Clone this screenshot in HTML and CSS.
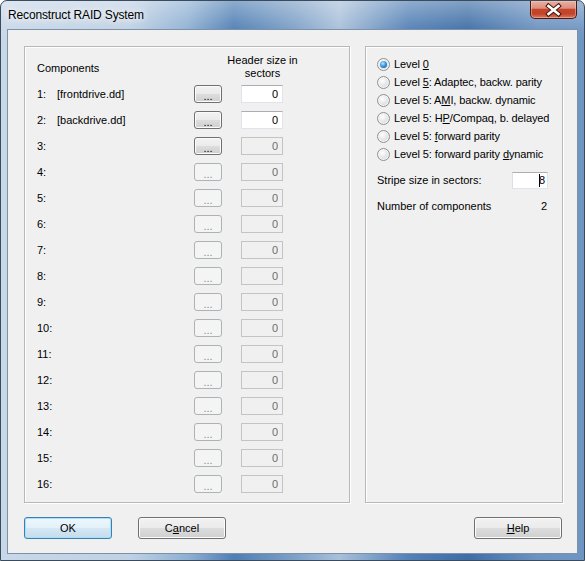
FILE: index.html
```html
<!DOCTYPE html>
<html>
<head>
<meta charset="utf-8">
<title>Reconstruct RAID System</title>
<link rel="stylesheet" href="styles.css">
</head>
<body>
<div class="window">
  <div class="titlebar">
    <span class="title">Reconstruct RAID System</span>
    <div class="close">
      <svg width="45" height="18" viewBox="0 0 45 18">
        <path d="M17.5 5 L27.5 13 M27.5 5 L17.5 13" stroke="#43160f" stroke-width="4.6" stroke-linecap="square" fill="none"/>
        <path d="M17.5 5 L27.5 13 M27.5 5 L17.5 13" stroke="#ffffff" stroke-width="2.6" stroke-linecap="square" fill="none"/>
      </svg>
    </div>
  </div>
  <div class="client">
    <div class="groups">
      <div class="group left-group">
        <div class="comp-grid">
          <div class="hdr-comp">Components</div>
          <div class="hdr-size">Header size in<br>sectors</div>

          <span class="num">1:</span><span class="name">[frontdrive.dd]</span><button class="btn dots">...</button><input class="in" value="0">
          <span class="num">2:</span><span class="name">[backdrive.dd]</span><button class="btn dots">...</button><input class="in" value="0">
          <span class="num">3:</span><span class="name"></span><button class="btn dots">...</button><input class="in" value="0" disabled>
          <span class="num">4:</span><span class="name"></span><button class="btn dots" disabled>...</button><input class="in" value="0" disabled>
          <span class="num">5:</span><span class="name"></span><button class="btn dots" disabled>...</button><input class="in" value="0" disabled>
          <span class="num">6:</span><span class="name"></span><button class="btn dots" disabled>...</button><input class="in" value="0" disabled>
          <span class="num">7:</span><span class="name"></span><button class="btn dots" disabled>...</button><input class="in" value="0" disabled>
          <span class="num">8:</span><span class="name"></span><button class="btn dots" disabled>...</button><input class="in" value="0" disabled>
          <span class="num">9:</span><span class="name"></span><button class="btn dots" disabled>...</button><input class="in" value="0" disabled>
          <span class="num">10:</span><span class="name"></span><button class="btn dots" disabled>...</button><input class="in" value="0" disabled>
          <span class="num">11:</span><span class="name"></span><button class="btn dots" disabled>...</button><input class="in" value="0" disabled>
          <span class="num">12:</span><span class="name"></span><button class="btn dots" disabled>...</button><input class="in" value="0" disabled>
          <span class="num">13:</span><span class="name"></span><button class="btn dots" disabled>...</button><input class="in" value="0" disabled>
          <span class="num">14:</span><span class="name"></span><button class="btn dots" disabled>...</button><input class="in" value="0" disabled>
          <span class="num">15:</span><span class="name"></span><button class="btn dots" disabled>...</button><input class="in" value="0" disabled>
          <span class="num">16:</span><span class="name"></span><button class="btn dots" disabled>...</button><input class="in" value="0" disabled>
        </div>
      </div>
      <div class="group right-group">
        <div class="radios">
          <div class="radio-row"><span class="radio on"></span><span>Level <u>0</u></span></div>
          <div class="radio-row"><span class="radio"></span><span>Level <u>5</u>: Adaptec, backw. parity</span></div>
          <div class="radio-row"><span class="radio"></span><span>Level 5: A<u>M</u>I, backw. dynamic</span></div>
          <div class="radio-row"><span class="radio"></span><span>Level 5: H<u>P</u>/Compaq, b. delayed</span></div>
          <div class="radio-row"><span class="radio"></span><span>Level 5: <u>f</u>orward parity</span></div>
          <div class="radio-row"><span class="radio"></span><span>Level 5: forward parity <u>d</u>ynamic</span></div>
        </div>
        <div class="field-row stripe">
          <span>Stripe size in sectors:</span>
          <div class="stripe-in"><span class="caret"></span>8</div>
        </div>
        <div class="field-row count">
          <span>Number of components</span>
          <span>2</span>
        </div>
      </div>
    </div>
    <div class="buttons">
      <button class="btn push default">OK</button>
      <button class="btn push cancel">C<u>a</u>ncel</button>
      <button class="btn push help"><u>H</u>elp</button>
    </div>
  </div>
</div>
</body>
</html>
```

FILE: styles.css
```css
html, body {
  margin: 0;
  padding: 0;
}

body {
  width: 585px;
  height: 561px;
  overflow: hidden;
  font-family: "Liberation Sans", Arial, sans-serif;
  font-size: 11px;
  color: #000;
  background: #ffffff;
}

.window {
  width: 585px;
  height: 561px;
  box-sizing: border-box;
  display: flex;
  flex-direction: column;
  border: 1px solid #3b4b5e;
  border-radius: 7px 7px 0 0;
  overflow: hidden;
  background:
    linear-gradient(180deg, rgba(255,255,255,0.35) 0px, rgba(255,255,255,0.05) 28px, rgba(255,255,255,0) 40px),
    linear-gradient(90deg, #c9d8e8 0%, #c0d1e4 22%, #8fb0d3 32%, #4f7eb3 40%, #7c9fc6 50%, #a9c0da 58%, #5380b5 70%, #3e6ea6 80%, #6d93c0 92%, #6f95c2 100%);
}

.titlebar {
  height: 28px;
  flex: none;
  display: flex;
  justify-content: space-between;
  align-items: center;
  padding-left: 7px;
}

.title {
  font-family: "Liberation Sans", Arial, sans-serif;
  font-size: 12px;
  color: #000;
  text-shadow: 0 0 6px #fff, 0 0 10px rgba(255,255,255,0.9);
  letter-spacing: -0.15px;
}

.close {
  align-self: flex-start;
  width: 47px;
  height: 18px;
  box-sizing: border-box;
  margin-right: 7px;
  border: 1px solid #4a1a12;
  border-top: none;
  border-radius: 0 0 5px 5px;
  background: linear-gradient(180deg, #eab0a3 0%, #de8f7c 42%, #c4452b 50%, #c24328 75%, #dc7660 100%);
  box-shadow: inset 0 0 0 1px rgba(255, 210, 200, 0.45);
  display: flex;
  align-items: center;
  justify-content: center;
}

.close svg {
  display: block;
}

.client {
  flex: 1;
  margin: 0 6px 6px 6px;
  border: 1px solid #7d91a8;
  background: #f0f0f0;
  padding: 16px 14px 0 16px;
  display: flex;
  flex-direction: column;
}

.groups {
  display: flex;
  gap: 15px;
  height: 457px;
}

.group {
  box-sizing: border-box;
  height: 457px;
  border: 1px solid #b8b8b8;
  box-shadow: inset 1px 1px 0 #ffffff, 1px 1px 0 #ffffff;
}

.left-group {
  width: 326px;
  padding: 7px 0 0 12px;
}

.right-group {
  width: 198px;
  padding: 8px 14px 0 11px;
}

/* Components grid */
.comp-grid {
  display: grid;
  grid-template-columns: 20px 137px 28px 61px;
  grid-template-rows: 27px;
  grid-auto-rows: 26px;
  align-items: center;
}

.hdr-comp {
  grid-column: 1 / 3;
  grid-row: 1;
  line-height: 13px;
  align-self: center;
  padding-top: 1px;
}

.hdr-size {
  grid-column: 4;
  grid-row: 1;
  line-height: 13px;
  text-align: center;
  margin-right: -20px;
  white-space: nowrap;
  align-self: start;
}

.num {
  grid-column: 1;
  line-height: 13px;
  white-space: nowrap;
}

.name {
  grid-column: 2;
  line-height: 13px;
  white-space: nowrap;
}

.btn {
  font-family: "Liberation Sans", Arial, sans-serif;
  font-size: 11px;
  color: #000;
  box-sizing: border-box;
  margin: 0;
  padding: 0;
  border: 1px solid #707070;
  border-radius: 3px;
  background: linear-gradient(180deg, #f2f2f2 0%, #ebebeb 48%, #dddddd 52%, #cfcfcf 100%);
  box-shadow: inset 0 0 0 1px #fbfbfb;
}

.btn:disabled {
  border-color: #adb2b5;
  background: #f4f4f4;
  box-shadow: none;
  color: #8a8a8a;
}

.dots {
  grid-column: 3;
  width: 28px;
  height: 18px;
  line-height: 16px;
  padding-top: 2px;
}

.in {
  grid-column: 4;
  justify-self: end;
  width: 42px;
  height: 18px;
  box-sizing: border-box;
  margin: 0;
  padding: 0 4px 0 0;
  border: 1px solid #e2e3ea;
  border-top-color: #abadb3;
  background: #ffffff;
  font-family: "Liberation Sans", Arial, sans-serif;
  font-size: 11px;
  color: #000;
  text-align: right;
  outline: none;
}

.in:disabled {
  background: #f0f0f0;
  border-color: #c4c4c4;
  color: #6d6d6d;
  -webkit-text-fill-color: #6d6d6d;
  opacity: 1;
}

/* Radio group */
.radios {
  display: flex;
  flex-direction: column;
}

.radio-row {
  height: 18px;
  display: flex;
  align-items: center;
  gap: 4px;
  white-space: nowrap;
  letter-spacing: -0.1px;
}

.radio {
  width: 13px;
  height: 13px;
  box-sizing: border-box;
  border-radius: 50%;
  border: 1px solid #8f9090;
  background: radial-gradient(circle at 40% 35%, #ffffff 0%, #e8e8e8 45%, #cfcfcf 100%);
  box-shadow: inset 0 0 0 1px #f6f6f6;
  position: relative;
  flex: none;
}

.radio.on::after {
  content: "";
  position: absolute;
  left: 2px;
  top: 2px;
  width: 7px;
  height: 7px;
  border-radius: 50%;
  background: radial-gradient(circle at 40% 35%, #b8e8ff 0%, #3d9ae0 45%, #0c4f8e 100%);
}

.field-row {
  height: 18px;
  display: flex;
  align-items: center;
  justify-content: space-between;
  white-space: nowrap;
}

.stripe {
  margin-top: 8px;
}

.count {
  margin-top: 8px;
}

.stripe-in {
  width: 36px;
  height: 17px;
  box-sizing: border-box;
  border: 1px solid #e2e3ea;
  border-top-color: #abadb3;
  border-left-color: #dbdfe6;
  background: #ffffff;
  display: flex;
  align-items: center;
  justify-content: flex-end;
  padding-right: 2px;
  line-height: 13px;
}

.caret {
  width: 1px;
  height: 13px;
  background: #000;
  margin-right: -1px;
}

.count span:last-child {
  padding-right: 1px;
}

/* Bottom buttons */
.buttons {
  margin-top: 14px;
  display: flex;
  padding-right: 1px;
}

.push {
  width: 88px;
  height: 22px;
  line-height: 18px;
}

.default {
  border-color: #3c7fb1;
  box-shadow: inset 0 0 0 1px #a7e0f8;
  background: linear-gradient(180deg, #eef7fc 0%, #e3f1fa 48%, #d3e7f4 52%, #c6dcec 100%);
}

.cancel {
  margin-left: 26px;
}

.help {
  margin-left: auto;
}

u {
  text-decoration: underline;
  text-underline-offset: 1px;
}
```
